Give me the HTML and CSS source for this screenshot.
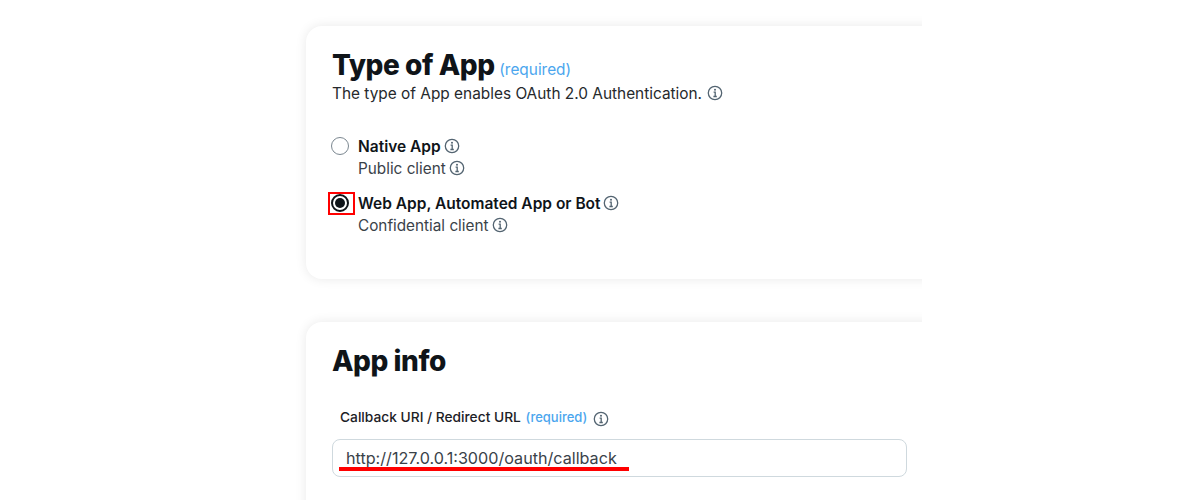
FILE: index.html
```html
<!DOCTYPE html>
<html lang="en">
<head>
<meta charset="utf-8">
<title>App settings</title>
<link rel="stylesheet" href="styles.css">
</head>
<body>
<svg class="defs" width="0" height="0" aria-hidden="true">
  <symbol id="info" viewBox="0 0 16 16">
    <circle cx="8" cy="8" r="6.7" fill="none" stroke="currentColor" stroke-width="1.3"/>
    <circle cx="8" cy="4.8" r="1" fill="currentColor"/>
    <path d="M6.6 7.1H8.2V11.2M6.4 11.5H9.8" fill="none" stroke="currentColor" stroke-width="1.3"/>
  </symbol>
</svg>
<main class="page">
  <section class="card card-type">
    <h2 class="heading">Type of App <span class="required-lg">(required)</span></h2>
    <p class="lead">The type of App enables OAuth 2.0 Authentication. <svg class="info info-lead"><use href="#info"/></svg></p>
    <div class="options">
      <div class="option">
        <span class="radio"></span>
        <div>
          <div class="opt-title">Native App <svg class="info"><use href="#info"/></svg></div>
          <div class="opt-sub">Public client <svg class="info"><use href="#info"/></svg></div>
        </div>
      </div>
      <div class="option">
        <span class="radio radio-on"><span class="mark-box"></span></span>
        <div>
          <div class="opt-title">Web App, Automated App or Bot <svg class="info"><use href="#info"/></svg></div>
          <div class="opt-sub">Confidential client <svg class="info"><use href="#info"/></svg></div>
        </div>
      </div>
    </div>
  </section>
  <section class="card card-info">
    <h2 class="heading">App info</h2>
    <div class="label">Callback URI / Redirect URL <span class="required-sm">(required)</span> <svg class="info info-label"><use href="#info"/></svg></div>
    <div class="input"><span class="input-text">http://127.0.0.1:3000/oauth/callback</span><span class="underline"></span></div>
  </section>
</main>
</body>
</html>
```
FILE: styles.css
```css
* { box-sizing: border-box; }
html, body { margin: 0; height: 500px; overflow: hidden; background: #fff; }
body { font-family: Inter, "Liberation Sans", sans-serif; color: #0f1419; }
.defs { position: absolute; }
.page { width: 636px; height: 500px; margin-left: 286px; padding: 26px 0 0 20px; overflow: hidden; display: flex; flex-direction: column; gap: 43px; }
.card { width: 640px; flex: none; background: #fff; border-radius: 16px; box-shadow: 0 0 12px rgba(0,0,0,.09); padding: 0 26px; }
.card-type { height: 253px; padding-top: 21px; }
.card-info { height: 300px; padding-top: 21px; }
.heading { margin: 0; font-size: 28px; line-height: 36px; font-weight: 800; letter-spacing: -0.45px; }
.required-lg { font-size: 15.4px; font-weight: 400; color: #4ba6ee; letter-spacing: 0; margin-left: -1px; }
.required-sm { color: #4ba6ee; font-size: 13px; margin-left: 1px; }
.lead { margin: -4px 0 0; font-size: 15.4px; line-height: 20px; color: #26292c; }
.info { width: 16px; height: 16px; color: #536471; vertical-align: -2px; margin-left: -1px; }
.info-lead { margin-left: 1px; }
.options { margin-top: 32px; display: flex; flex-direction: column; gap: 13px; }
.option { display: flex; gap: 9px; align-items: flex-start; margin-left: -1px; }
.radio { position: relative; flex: none; width: 18px; height: 18px; margin-top: 1px; border: 1.5px solid #7b8790; border-radius: 50%; }
.radio-on { border: 2px solid #0f1419; background: #fff; }
.radio-on::after { content: ""; position: absolute; left: 2px; top: 2px; width: 10px; height: 10px; border-radius: 50%; background: #0f1419; }
.mark-box { position: absolute; left: -5px; top: -4px; width: 27px; height: 23px; border: 2px solid #f00; }
.opt-title { font-size: 15.5px; line-height: 22px; font-weight: 600; }
.opt-sub { font-size: 15.3px; line-height: 22px; color: #3a4249; }
.label { margin: 28px 0 0 8px; font-size: 13.75px; line-height: 20px; font-weight: 500; color: #1c2126; }
.info-label { margin-left: 2px; vertical-align: -5px; }
.input { position: relative; margin-top: 12px; width: 575px; height: 38px; border: 1px solid #cfd9de; border-radius: 8px; padding: 0 13px; font-size: 16.15px; line-height: 37px; color: #3a4249; }
.input-text { display: block; }
.underline { position: absolute; left: 6px; top: 27px; width: 290px; height: 3.5px; background: #f00; }
```
